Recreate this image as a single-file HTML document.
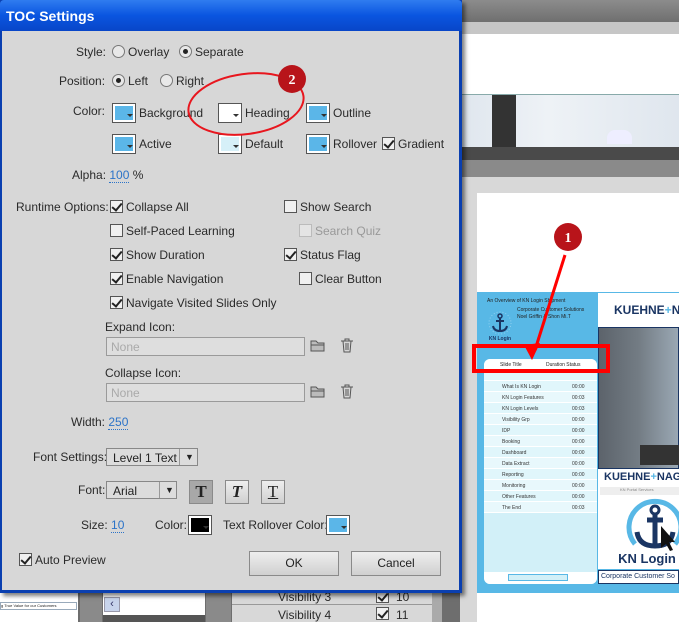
<!DOCTYPE html>
<html><head><meta charset="utf-8"><style>
*{margin:0;padding:0;box-sizing:border-box}
body{width:679px;height:622px;overflow:hidden;position:relative;background:#6e6e6e;font-family:"Liberation Sans",sans-serif;font-size:12px;color:#222}
.a{position:absolute}
.t{position:absolute;white-space:nowrap;font-size:12px;color:#2a2a2a}
.rad{position:absolute;width:13px;height:13px;border:1px solid #777;border-radius:50%;background:#e8e8e8}
.rad.on::after{content:"";position:absolute;left:3px;top:3px;width:5px;height:5px;border-radius:50%;background:#222}
.cb{position:absolute;width:13px;height:13px;border:1px solid #555;background:#f0f0f0}
.cb.on::after{content:"";position:absolute;left:3px;top:0px;width:4px;height:8px;border:solid #222;border-width:0 2px 2px 0;transform:rotate(40deg)}
.sw{position:absolute;width:24px;height:20px;border:1px solid #555;background:#fff;padding:2px}
.sw i{display:block;width:100%;height:100%;background:#5bb6e8}
.sw::after{content:"";position:absolute;right:2px;bottom:2px;border:3px solid transparent;border-top:3px solid #333}
.lnk{color:#2b73c8;border-bottom:1px dotted #2b73c8}
.inp{position:absolute;height:19px;border:1px solid #9a9a9a;background:#dedede;color:#aaa;padding:2px 4px}
.btn{position:absolute;border:1px solid #8a8a8a;background:linear-gradient(#eee,#d0d0d0);text-align:center}
.row{position:absolute;left:484px;width:113px;height:11px;font-size:5px;color:#333;border-bottom:1px solid #fff;padding:3px 0 0 18px;white-space:nowrap}
.row span{position:absolute;left:88px;top:3px}
</style></head><body>
<div class="a" style="left:460px;top:0;width:219px;height:22px;background:linear-gradient(#8c8c8c,#6f6f6f)"></div>
<div class="a" style="left:460px;top:22px;width:219px;height:12px;background:#c6c6c6"></div>
<div class="a" style="left:460px;top:34px;width:219px;height:60px;background:#fff"></div>
<div class="a" style="left:460px;top:94px;width:219px;height:53px;background:linear-gradient(90deg,#dfe6ee,#eef2f6 40%,#dfe6ee);border-top:1px solid #8aa"></div>
<div class="a" style="left:492px;top:95px;width:24px;height:52px;background:#333"></div>
<div class="a" style="left:607px;top:130px;width:25px;height:14px;background:#eef;border-radius:8px 8px 0 0"></div>
<div class="a" style="left:460px;top:147px;width:219px;height:13px;background:#4a4a4a"></div>
<div class="a" style="left:460px;top:160px;width:219px;height:17px;background:#8a8a8a"></div>
<div class="a" style="left:460px;top:177px;width:219px;height:445px;background:#d8d8d8"></div>
<div class="a" style="left:477px;top:193px;width:202px;height:429px;background:#fff"></div>
<div class="a" style="left:477px;top:292px;width:202px;height:301px;background:#58b8e6"></div>
<div class="a" style="left:484px;top:359px;width:113px;height:225px;background:#d2f0f8;border-radius:6px"></div>
<div class="a" style="left:484px;top:359px;width:113px;height:11px;background:#fff;border-radius:6px 6px 0 0;font-size:5px;padding:3px 0 0 16px;white-space:nowrap">Slide Title<span style="position:absolute;left:62px">Duration Status</span></div>
<div class="row" style="top:370px;background:#e0f6fb"></div>
<div class="row" style="top:381px;background:#e0f6fb">What Is KN Login<span>00:00</span></div>
<div class="row" style="top:392px;background:#e8f8fc">KN Login Features<span>00:03</span></div>
<div class="row" style="top:403px;background:#e0f6fb">KN Login Levels<span>00:03</span></div>
<div class="row" style="top:414px;background:#e8f8fc">Visibility Grp<span>00:00</span></div>
<div class="row" style="top:425px;background:#e0f6fb">IDP<span>00:00</span></div>
<div class="row" style="top:436px;background:#e8f8fc">Booking<span>00:00</span></div>
<div class="row" style="top:447px;background:#e0f6fb">Dashboard<span>00:00</span></div>
<div class="row" style="top:458px;background:#e8f8fc">Data Extract<span>00:00</span></div>
<div class="row" style="top:469px;background:#e0f6fb">Reporting<span>00:00</span></div>
<div class="row" style="top:480px;background:#e8f8fc">Monitoring<span>00:00</span></div>
<div class="row" style="top:491px;background:#e0f6fb">Other Features<span>00:00</span></div>
<div class="row" style="top:502px;background:#e8f8fc">The End<span>00:03</span></div>
<div class="a" style="left:484px;top:572px;width:113px;height:12px;background:#fff;border-radius:0 0 6px 6px"></div>
<div class="a" style="left:508px;top:574px;width:60px;height:7px;border:1px solid #58b8e6;background:#d2f0f8"></div>
<div class="a" style="left:487px;top:298px;font-size:5px;white-space:nowrap">An Overview of KN Login Shipment</div>
<div class="a" style="left:517px;top:307px;font-size:5px;white-space:nowrap">Corporate Customer Solutions</div>
<div class="a" style="left:517px;top:314px;font-size:5px;white-space:nowrap">Noel Griffin &amp; Shon Mi.T</div>
<svg class="a" style="left:487px;top:310px" width="26" height="32"><circle cx="13" cy="13" r="11" fill="none" stroke="#8fd0f0" stroke-width="1" stroke-dasharray="1 2"/><circle cx="13" cy="6" r="2" fill="none" stroke="#1a3563" stroke-width="1.5"/><path d="M13 8V21M9 11H17M6 16Q7 21 13 21Q19 21 20 16" stroke="#1a3563" stroke-width="2" fill="none"/><text x="13" y="30" font-size="5" fill="#1a3563" font-weight="bold" text-anchor="middle">KN Login</text></svg>
<div class="a" style="left:598px;top:293px;width:81px;height:34px;background:#fff;font-size:12px;font-weight:bold;color:#1a3563;padding:10px 0 0 16px;white-space:nowrap">KUEHNE<span style="color:#58b8e6">+</span>N</div>
<div class="a" style="left:598px;top:327px;width:81px;height:142px;background:linear-gradient(90deg,#5c636b,#737c84 50%,#9aa8b4);border:1px solid #1a3563"></div>
<div class="a" style="left:640px;top:445px;width:39px;height:20px;background:#333"></div>
<div class="a" style="left:598px;top:469px;width:81px;height:100px;background:#fff;font-size:11px;font-weight:bold;color:#1a3563;padding:2px 0 0 6px;white-space:nowrap">KUEHNE<span style="color:#58b8e6">+</span>NAGE</div>
<div class="a" style="left:600px;top:487px;width:79px;height:8px;background:#eee;font-size:4px;color:#888;padding-left:20px">KN Portal Services</div>
<svg class="a" style="left:615px;top:496px" width="64" height="74"><path d="M20 48A26 26 0 1 1 60 48" fill="none" stroke="#58b8e6" stroke-width="5"/><circle cx="40" cy="14" r="4" fill="none" stroke="#1a3563" stroke-width="3"/><path d="M40 18V50M32 24H48M22 36Q24 50 40 50Q56 50 58 36" stroke="#1a3563" stroke-width="5" fill="none"/><path d="M46 30L60 46L54 46L58 54L55 55L51 48L46 52Z" fill="#111"/><text x="32" y="67" font-size="13" font-weight="bold" fill="#1a3563" text-anchor="middle" font-family="Liberation Sans">KN Login</text></svg>
<div class="a" style="left:598px;top:570px;width:81px;height:14px;background:#fff;border:1px solid #1a3563;font-size:7px;color:#1a3563;padding:2px;white-space:nowrap">Corporate Customer So</div>
<svg class="a" style="left:460px;top:0" width="219" height="622">
<path d="M105 255 L75 350" stroke="#f00" stroke-width="3" fill="none"/>
<path d="M64 345 L80 343 L72 360 Z" fill="#f00"/>
<rect x="14" y="346" width="134" height="25" fill="none" stroke="#f00" stroke-width="4"/>
<circle cx="108" cy="237" r="14" fill="#b8141a"/>
<text x="108" y="242" font-family="Liberation Serif" font-weight="bold" font-size="14" fill="#fff" text-anchor="middle">1</text>
</svg>
<div class="a" style="left:0;top:592px;width:78px;height:30px;background:#fff"></div>
<div class="a" style="left:0;top:602px;width:77px;height:8px;border:1px solid #9ab;font-size:4px;white-space:nowrap;overflow:hidden">g True Value for our Customers</div>
<div class="a" style="left:80px;top:592px;width:22px;height:30px;background:#8a8a8a"></div>
<div class="a" style="left:103px;top:592px;width:102px;height:30px;background:#fff"></div>
<div class="a" style="left:104px;top:597px;width:16px;height:15px;background:#c8d4ec;border:1px solid #99a;color:#336;font-size:11px;text-align:center">‹</div>
<div class="a" style="left:103px;top:615px;width:102px;height:7px;background:#555"></div>
<div class="a" style="left:206px;top:592px;width:25px;height:30px;background:#8a8a8a"></div>
<div class="a" style="left:232px;top:592px;width:200px;height:30px;background:#d8d8d8"></div>
<div class="a" style="left:232px;top:604px;width:200px;height:1px;background:#999"></div>
<div class="t" style="left:278px;top:590px;font-size:12px">Visibility 3</div>
<div class="t" style="left:278px;top:608px;font-size:12px">Visibility 4</div>
<div class="cb on" style="left:376px;top:590px"></div><div class="t" style="left:396px;top:590px">10</div>
<div class="cb on" style="left:376px;top:607px"></div><div class="t" style="left:396px;top:608px">11</div>
<div class="a" style="left:432px;top:592px;width:10px;height:30px;background:#aaa"></div>
<div class="a" style="left:0;top:0;width:462px;height:593px;background:#0a3fb0;box-shadow:3px 3px 4px rgba(0,0,0,.5)"></div>
<div class="a" style="left:0;top:0;width:462px;height:31px;background:linear-gradient(#2f7cf0,#0a55e0 50%,#0846c8);border-radius:4px 4px 0 0"></div>
<div class="t" style="left:6px;top:8px;font-size:14px;font-weight:bold;color:#fff">TOC Settings</div>
<div class="a" style="left:2px;top:31px;width:457px;height:559px;background:#d7d7d7"></div>
<div class="t" style="left:76px;top:45px">Style:</div>
<div class="rad" style="left:112px;top:45px"></div><div class="t" style="left:128px;top:45px">Overlay</div>
<div class="rad on" style="left:179px;top:45px"></div><div class="t" style="left:195px;top:45px">Separate</div>
<div class="t" style="left:59px;top:74px">Position:</div>
<div class="rad on" style="left:112px;top:74px"></div><div class="t" style="left:128px;top:74px">Left</div>
<div class="rad" style="left:160px;top:74px"></div><div class="t" style="left:176px;top:74px">Right</div>
<div class="t" style="left:73px;top:104px">Color:</div>
<div class="sw" style="left:112px;top:103px"><i></i></div><div class="t" style="left:139px;top:106px">Background</div>
<div class="sw" style="left:218px;top:103px"><i style="background:#fff"></i></div><div class="t" style="left:245px;top:106px">Heading</div>
<div class="sw" style="left:306px;top:103px"><i></i></div><div class="t" style="left:333px;top:106px">Outline</div>
<div class="sw" style="left:112px;top:134px"><i></i></div><div class="t" style="left:139px;top:137px">Active</div>
<div class="sw" style="left:218px;top:134px"><i style="background:#d6f0f8"></i></div><div class="t" style="left:245px;top:137px">Default</div>
<div class="sw" style="left:306px;top:134px"><i></i></div><div class="t" style="left:333px;top:137px">Rollover</div>
<div class="cb on" style="left:382px;top:137px"></div><div class="t" style="left:398px;top:137px">Gradient</div>
<div class="t" style="left:72px;top:168px">Alpha: <span class="lnk">100</span> %</div>
<div class="t" style="left:16px;top:200px">Runtime Options:</div>
<div class="cb on" style="left:110px;top:200px"></div><div class="t" style="left:126px;top:200px">Collapse All</div>
<div class="cb" style="left:284px;top:200px"></div><div class="t" style="left:300px;top:200px">Show Search</div>
<div class="cb" style="left:110px;top:224px"></div><div class="t" style="left:126px;top:224px">Self-Paced Learning</div>
<div class="cb" style="left:299px;top:224px;border-color:#bbb;background:#e4e4e4"></div><div class="t" style="left:315px;top:224px;color:#999">Search Quiz</div>
<div class="cb on" style="left:110px;top:248px"></div><div class="t" style="left:126px;top:248px">Show Duration</div>
<div class="cb on" style="left:284px;top:248px"></div><div class="t" style="left:300px;top:248px">Status Flag</div>
<div class="cb on" style="left:110px;top:272px"></div><div class="t" style="left:126px;top:272px">Enable Navigation</div>
<div class="cb" style="left:299px;top:272px"></div><div class="t" style="left:315px;top:272px">Clear Button</div>
<div class="cb on" style="left:110px;top:296px"></div><div class="t" style="left:126px;top:296px">Navigate Visited Slides Only</div>
<div class="t" style="left:105px;top:320px">Expand Icon:</div>
<div class="inp" style="left:106px;top:337px;width:199px">None</div>
<svg class="a" style="left:310px;top:339px" width="16" height="14"><path d="M1 2H6L8 4H14V12H1Z" fill="#bbb" stroke="#555"/><path d="M1 6H14" stroke="#555"/></svg>
<svg class="a" style="left:340px;top:338px" width="14" height="15"><path d="M1 3H13M5 3V1H9V3M3 3L4 14H10L11 3M6 5V12M8 5V12" stroke="#555" fill="none"/></svg>
<div class="t" style="left:105px;top:366px">Collapse Icon:</div>
<div class="inp" style="left:106px;top:383px;width:199px">None</div>
<svg class="a" style="left:310px;top:385px" width="16" height="14"><path d="M1 2H6L8 4H14V12H1Z" fill="#bbb" stroke="#555"/><path d="M1 6H14" stroke="#555"/></svg>
<svg class="a" style="left:340px;top:384px" width="14" height="15"><path d="M1 3H13M5 3V1H9V3M3 3L4 14H10L11 3M6 5V12M8 5V12" stroke="#555" fill="none"/></svg>
<div class="t" style="left:71px;top:415px">Width: <span class="lnk">250</span></div>
<div class="t" style="left:33px;top:450px">Font Settings:</div>
<div class="a" style="left:106px;top:448px;width:92px;height:18px;border:1px solid #888;background:#dcdcdc;padding:2px 6px;white-space:nowrap">Level 1 Text<span style="position:absolute;left:72px;top:0;height:16px;border-left:1px solid #999;padding-left:5px;font-size:9px;line-height:16px">▼</span></div>
<div class="t" style="left:78px;top:483px">Font:</div>
<div class="a" style="left:106px;top:481px;width:71px;height:18px;border:1px solid #888;background:#dcdcdc;padding:2px 6px">Arial<span style="position:absolute;left:52px;top:0;height:16px;border-left:1px solid #999;padding-left:5px;font-size:9px;line-height:16px">▼</span></div>
<div class="btn" style="left:189px;top:480px;width:24px;height:24px;background:#a8a8a8;font-family:'Liberation Serif';font-weight:bold;font-size:17px;line-height:22px">T</div>
<div class="btn" style="left:225px;top:480px;width:24px;height:24px;font-family:'Liberation Serif';font-style:italic;font-weight:bold;font-size:17px;line-height:22px">T</div>
<div class="btn" style="left:261px;top:480px;width:24px;height:24px;font-family:'Liberation Serif';font-size:17px;line-height:22px;text-decoration:underline">T</div>
<div class="t" style="left:81px;top:518px">Size: <span class="lnk">10</span></div>
<div class="t" style="left:155px;top:518px">Color:</div>
<div class="sw" style="left:188px;top:515px"><i style="background:#000"></i></div>
<div class="t" style="left:223px;top:518px">Text Rollover Color:</div>
<div class="sw" style="left:326px;top:515px"><i></i></div>
<div class="cb on" style="left:19px;top:553px"></div><div class="t" style="left:35px;top:553px">Auto Preview</div>
<div class="btn" style="left:249px;top:551px;width:90px;height:25px;line-height:23px">OK</div>
<div class="btn" style="left:351px;top:551px;width:90px;height:25px;line-height:23px">Cancel</div>
<svg class="a" style="left:0;top:0" width="460" height="200">
<ellipse cx="246" cy="104" rx="58" ry="30" transform="rotate(-8 246 104)" fill="none" stroke="#e8161e" stroke-width="2"/>
<circle cx="292" cy="79" r="14" fill="#b8141a"/>
<text x="292" y="84" font-family="Liberation Serif" font-weight="bold" font-size="14" fill="#fff" text-anchor="middle">2</text>
</svg>
</body></html>
